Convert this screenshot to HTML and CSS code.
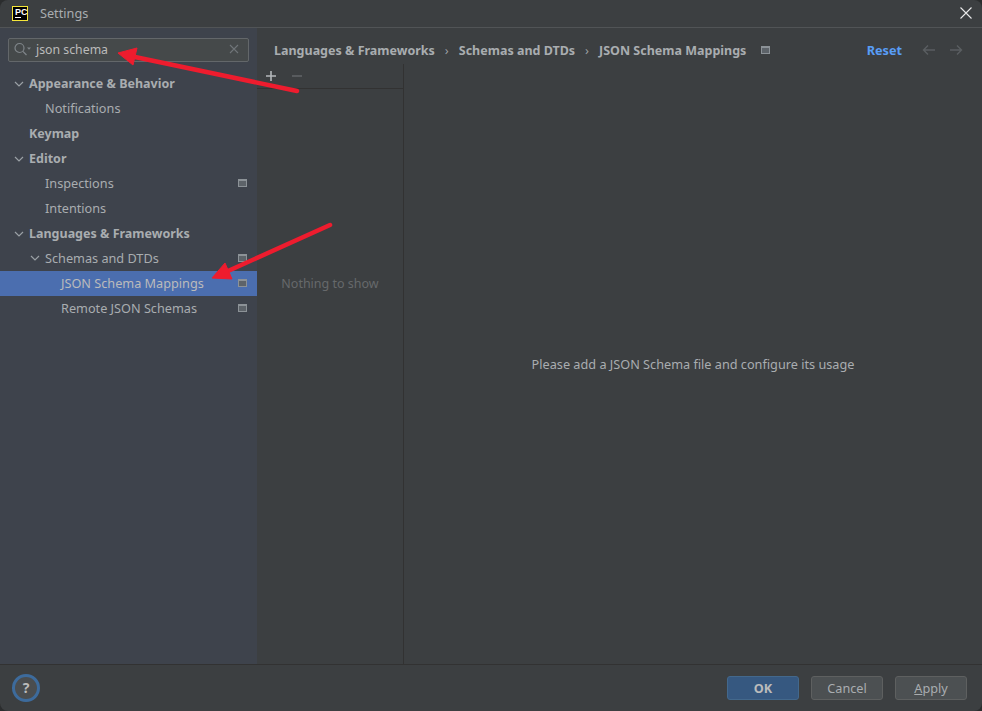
FILE: index.html
```html
<!DOCTYPE html>
<html lang="en">
  <head>
    <meta charset="UTF-8" />
    <title>Settings</title>
    <link rel="stylesheet" href="styles.css">
  </head>
  <body>
    <div class="dialog">
      <!-- Title bar -->
      <header class="titlebar">
        <div class="logo"><span class="logo-text">PC</span><span class="logo-bar"></span></div>
        <span class="title">Settings</span>
        <svg class="close" width="14" height="14" viewBox="0 0 14 14"><path d="M1.5 1.5 L12.5 12.5 M12.5 1.5 L1.5 12.5" stroke="#e8e8e8" stroke-width="1.1" fill="none"/></svg>
      </header>

      <div class="body">
        <!-- Sidebar -->
        <aside class="sidebar">
          <div class="search">
            <svg class="search-icon" width="18" height="14" viewBox="0 0 18 14"><circle cx="5.5" cy="6" r="4.5" stroke="#7f8589" stroke-width="1.2" fill="none"/><path d="M8.9 9.4 L12.5 13" stroke="#7f8589" stroke-width="1.3"/><path d="M13 5.5 h4 l-2 2.2 z" fill="#7f8589"/></svg>
            <span class="search-text">json schema</span>
            <svg class="search-clear" width="10" height="10" viewBox="0 0 10 10"><path d="M1 1 L9 9 M9 1 L1 9" stroke="#6f7478" stroke-width="1.1"/></svg>
          </div>
          <ul class="tree">
            <li class="row bold"><svg class="chev" width="10" height="6" viewBox="0 0 10 6"><path d="M1 1 L5 5 L9 1" stroke="#9aa0a5" stroke-width="1.2" fill="none"/></svg>Appearance &amp; Behavior</li>
            <li class="row lvl1">Notifications</li>
            <li class="row bold">Keymap</li>
            <li class="row bold"><svg class="chev" width="10" height="6" viewBox="0 0 10 6"><path d="M1 1 L5 5 L9 1" stroke="#9aa0a5" stroke-width="1.2" fill="none"/></svg>Editor</li>
            <li class="row lvl1">Inspections<span class="proj"></span></li>
            <li class="row lvl1">Intentions</li>
            <li class="row bold"><svg class="chev" width="10" height="6" viewBox="0 0 10 6"><path d="M1 1 L5 5 L9 1" stroke="#9aa0a5" stroke-width="1.2" fill="none"/></svg>Languages &amp; Frameworks</li>
            <li class="row lvl1 has-chev"><svg class="chev" width="10" height="6" viewBox="0 0 10 6"><path d="M1 1 L5 5 L9 1" stroke="#9aa0a5" stroke-width="1.2" fill="none"/></svg>Schemas and DTDs<span class="proj"></span></li>
            <li class="row lvl2 selected">JSON Schema Mappings<span class="proj"></span></li>
            <li class="row lvl2">Remote JSON Schemas<span class="proj"></span></li>
          </ul>
        </aside>

        <!-- Main panel -->
        <main class="main">
          <div class="crumbs">
            <span class="crumb">Languages &amp; Frameworks</span>
            <span class="sep">›</span>
            <span class="crumb">Schemas and DTDs</span>
            <span class="sep">›</span>
            <span class="crumb">JSON Schema Mappings</span>
            <span class="proj crumb-proj"></span>
            <span class="reset">Reset</span>
            <svg class="nav" width="14" height="12" viewBox="0 0 14 12"><path d="M13 6 H1.5 M6 1.5 L1.5 6 L6 10.5" stroke="#5a5e61" stroke-width="1.4" fill="none"/></svg>
            <svg class="nav" width="14" height="12" viewBox="0 0 14 12"><path d="M1 6 H12.5 M8 1.5 L12.5 6 L8 10.5" stroke="#5a5e61" stroke-width="1.4" fill="none"/></svg>
          </div>
          <div class="content">
            <section class="list-pane">
              <div class="toolbar">
                <svg width="12" height="12" viewBox="0 0 12 12"><path d="M6 1 V11 M1 6 H11" stroke="#b4b8bb" stroke-width="1.6"/></svg>
                <svg width="12" height="12" viewBox="0 0 12 12"><path d="M1 6 H11" stroke="#5f6366" stroke-width="1.6"/></svg>
              </div>
              <div class="empty">Nothing to show</div>
            </section>
            <section class="detail">Please add a JSON Schema file and configure its usage</section>
          </div>
        </main>
      </div>

      <!-- Footer -->
      <footer class="footer">
        <div class="help">?</div>
        <div class="buttons">
          <button class="btn primary">OK</button>
          <button class="btn">Cancel</button>
          <button class="btn"><span class="mnemonic">A</span>pply</button>
        </div>
      </footer>

      <!-- Red annotation arrows -->
      <svg class="arrows" width="982" height="711" viewBox="0 0 982 711">
        <path d="M297 91 L135 57" stroke="#ee1c2e" stroke-width="4.5" stroke-linecap="round" fill="none"/>
        <path d="M118 53 L137 48 L133 65 Z" fill="#ee1c2e" stroke="#ee1c2e" stroke-linejoin="round"/>
        <path d="M330 225 L228 271" stroke="#ee1c2e" stroke-width="4.5" stroke-linecap="round" fill="none"/>
        <path d="M212 278 L225 263 L232 279 Z" fill="#ee1c2e" stroke="#ee1c2e" stroke-linejoin="round"/>
      </svg>
    </div>
  </body>
</html>
```

FILE: styles.css
```css
* {
  box-sizing: border-box;
}
body {
  margin: 0;
  width: 982px;
  height: 711px;
  overflow: hidden;
  background-color: #2b2d2e;
  font-family: "Noto Sans", "Open Sans", sans-serif;
  font-size: 12.7px;
  color: #bbbbbb;
}
.dialog {
  position: relative;
  display: flex;
  flex-direction: column;
  height: 711px;
  background-color: #3c3f41;
  border-radius: 8px;
  overflow: hidden;
}
.titlebar {
  display: flex;
  align-items: center;
  height: 28px;
  padding-left: 12px;
  border-bottom: 1px solid #515456;
}
.logo {
  width: 16px;
  height: 15px;
  background-color: #000;
  border: 1px solid #f5e63a;
  margin-top: -1px;
}
.logo-text {
  display: block;
  color: #fff;
  font-family: "Liberation Sans", sans-serif;
  font-size: 9px;
  font-weight: 700;
  line-height: 8px;
  padding: 1px 0 0 2px;
}
.logo-bar {
  display: block;
  width: 6px;
  height: 1px;
  margin: 1px 0 0 2px;
  background-color: #fff;
}
.title {
  margin: -1px 0 0 12px;
  color: #a9adb0;
}
.close {
  margin: -1px 9px 0 auto;
}
.body {
  display: flex;
  flex: 1;
  min-height: 0;
}
.sidebar {
  width: 257px;
  background-color: #3e434c;
  padding-top: 10px;
}
.search {
  display: flex;
  align-items: center;
  height: 24px;
  margin: 0 8px;
  padding: 0 9px 2px 5px;
  background-color: #45494a;
  border: 1px solid #63676a;
  border-radius: 2px;
}
.search-text {
  margin-left: 4px;
  font-size: 12.3px;
}
.search-clear {
  margin-left: auto;
}
.tree {
  list-style: none;
  margin: 9px 0 0;
  padding: 0;
}
.row {
  position: relative;
  display: flex;
  align-items: center;
  height: 25px;
  padding: 0 0 2px 29px;
  color: #a9adb0;
}
.bold {
  padding-bottom: 0;
  font-weight: 700;
  font-size: 12.5px;
}
.lvl1 {
  padding-left: 45px;
}
.lvl2 {
  padding-left: 61px;
}
.selected {
  background-color: #4b6eaf;
  color: #bbbbbb;
}
.chev {
  position: absolute;
  left: 14px;
}
.has-chev .chev {
  left: 30px;
}
.proj {
  width: 9px;
  height: 8px;
  border: 1px solid #8c9297;
  border-top-width: 2px;
  background-color: #5d6369;
}
.row .proj {
  position: absolute;
  right: 10px;
}
.main {
  flex: 1;
  display: flex;
  flex-direction: column;
  min-width: 0;
}
.crumbs {
  display: flex;
  align-items: center;
  height: 44px;
  padding: 0 19px 0 17px;
  margin-bottom: -8px;
}
.crumb {
  font-weight: 700;
  font-size: 12.5px;
  color: #a9adb0;
}
.sep {
  margin: 0 10px;
  color: #9a9ea1;
}
.crumb-proj {
  margin-left: 15px;
}
.reset {
  margin-left: auto;
  margin-right: 20px;
  font-weight: 700;
  color: #589df6;
}
.nav + .nav {
  margin-left: 13px;
}
.content {
  flex: 1;
  display: flex;
  min-height: 0;
}
.list-pane {
  display: flex;
  flex-direction: column;
  width: 147px;
  border-right: 1px solid #323232;
}
.toolbar {
  display: flex;
  align-items: center;
  gap: 14px;
  height: 25px;
  padding: 0 0 1px 8px;
  border-bottom: 1px solid #323232;
}
.empty {
  flex: 1;
  padding-top: 186px;
  text-align: center;
  font-size: 12.5px;
  color: #66696b;
}
.detail {
  flex: 1;
  padding-top: 291px;
  text-align: center;
  color: #a9adb0;
}
.footer {
  display: flex;
  align-items: center;
  justify-content: space-between;
  height: 47px;
  padding: 0 15px 0 12px;
  border-top: 1px solid #323232;
}
.help {
  width: 28px;
  height: 28px;
  border: 3px solid #3d6b9c;
  border-radius: 50%;
  background-color: #4a4d4f;
  color: #bbbbbb;
  font-weight: 700;
  font-size: 14px;
  line-height: 21px;
  text-align: center;
}
.buttons {
  display: flex;
  gap: 12px;
}
.btn {
  width: 72px;
  height: 24px;
  padding: 0;
  background-color: #4c5052;
  border: 1px solid #5e6060;
  border-radius: 3px;
  color: #a9adb0;
  font-family: inherit;
  font-size: 12.7px;
}
.primary {
  background-color: #365880;
  border-color: #43688c;
  font-weight: 700;
  color: #bbbbbb;
}
.mnemonic {
  text-decoration: underline;
}
.arrows {
  position: absolute;
  left: 0;
  top: 0;
  pointer-events: none;
}
```
